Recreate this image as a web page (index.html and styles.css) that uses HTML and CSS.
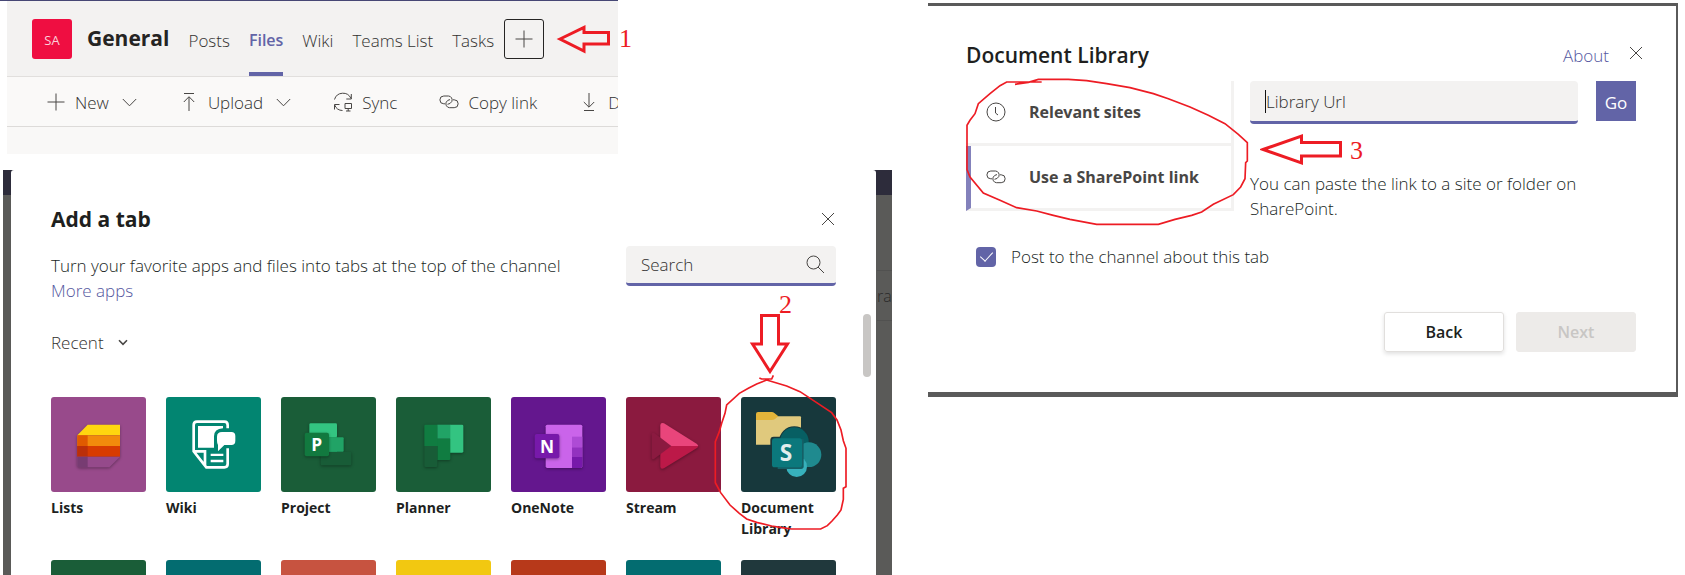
FILE: index.html
```
<!DOCTYPE html>
<html lang="en">
<head>
<meta charset="utf-8">
<title>Add a Document Library tab</title>
<link rel="stylesheet" href="styles.css">
</head>
<body>
<svg class="defs" aria-hidden="true">
  <symbol id="chevron" viewBox="0 0 15 9"><path d="M.8 1 7.5 7.8 14.2 1"/></symbol>
  <symbol id="close" viewBox="0 0 14 14"><path d="M1 1 13 13M13 1 1 13"/></symbol>
  <symbol id="plus" viewBox="0 0 20 20"><path d="M10 1.5v17M1.500 10h17"/></symbol>
  <symbol id="link" viewBox="0 0 20 14"><path d="M6 8.800H4.800A3.900 3.900 0 0 1 4.800 1H9.500A3.900 3.900 0 0 1 12.800 6.500Q11.500 9 8.500 9.300M14 4.800h1.200a3.900 3.900 0 0 1 0 7.900h-4.700A3.900 3.900 0 0 1 7.200 7.200Q8.500 4.800 11 4.600"/></symbol>
</svg>
<main class="page">
  <div class="column">
    <section class="channel">
      <header class="channel-head">
        <span class="avatar">SA</span>
        <h1 class="channel-name">General</h1>
        <nav class="tabs">
          <a class="tab" href="#posts">Posts</a>
          <a class="tab tab-active" href="#files">Files</a>
          <a class="tab" href="#wiki">Wiki</a>
          <a class="tab" href="#teams-list">Teams List</a>
          <a class="tab" href="#tasks">Tasks</a>
        </nav>
        <button class="add-tab" aria-label="Add a tab"><svg class="icon" width="20" height="20"><use href="#plus"/></svg></button>
      </header>
      <div class="toolbar">
        <button class="tool"><svg class="icon" width="20" height="20"><use href="#plus"/></svg>New<svg class="icon tool-chevron" width="15" height="9"><use href="#chevron"/></svg></button>
        <button class="tool"><svg class="icon" width="20" height="20" viewBox="0 0 20 20"><path d="M5 1.500h10M10 19V5M4.800 10 10 4.700 15.200 10"/></svg>Upload<svg class="icon tool-chevron" width="15" height="9"><use href="#chevron"/></svg></button>
        <button class="tool"><svg class="icon" width="20" height="20" viewBox="0 0 20 20"><path d="M1.500 7.500A8.800 8.800 0 0 1 18 6.500M18.300 2v5h-5M1.500 17.500v-5h5M1.700 13A8.500 8.500 0 0 0 9.500 18.500M12 11.500h6.500v5H12zM15.200 16.500V19M13 19h4.500"/></svg>Sync</button>
        <button class="tool"><svg class="icon" width="20" height="14"><use href="#link"/></svg>Copy link</button>
        <button class="tool"><svg class="icon" width="20" height="20" viewBox="0 0 20 20"><path d="M10 1v14M4.800 10 10 15.200 15.200 10M5 18.500h10"/></svg>D</button>
      </div>
      <div class="channel-body"></div>
      <svg class="mark mark-1" width="56" height="32" viewBox="556 23 56 32" aria-hidden="true"><path d="M560 39 584 27.500V32.500H608.500V44H584V51Z"/></svg>
      <span class="number number-1">1</span>
    </section>

    <section class="backdrop">
      <div class="backdrop-bar"></div>
      <span class="backdrop-text">ra</span>
      <div class="modal">
        <div class="modal-head">
          <h2 class="title">Add a tab</h2>
          <button class="close" aria-label="Close"><svg class="icon" width="14" height="14"><use href="#close"/></svg></button>
        </div>
        <div class="intro">
          <p class="intro-text">Turn your favorite apps and files into tabs at the top of the channel<br><a class="link" href="#more">More apps</a></p>
          <div class="search">
            <input class="search-input" type="text" placeholder="Search" aria-label="Search">
            <svg class="icon" width="19" height="19" viewBox="0 0 19 19"><circle cx="7.500" cy="7.500" r="6.500"/><path d="M12 12 18 18"/></svg>
          </div>
        </div>
        <button class="filter">Recent<svg class="icon filter-chevron" width="10" height="7" viewBox="0 0 10 7"><path d="M1 1.300 5 5.300 9 1.300"/></svg></button>
        <div class="apps">
          <a class="app" href="#lists">
            <svg class="tile lists" viewBox="0 0 285 285"><g class="raised"><path fill="#ffd60f" d="M110 83H207V115H79Z"/><path fill="#f28a0c" d="M79 115H207v32H79z"/><path fill="#e05a00" d="M79 115h31v32H79z"/><path fill="#d83b01" d="M79 147H207v32H79z"/><path fill="#bb2f09" d="M79 147h31v32H79z"/><path fill="#954a8b" d="M79 179H207L175 211H86q-7 0-7-7Z"/><path fill="#773c72" d="M79 179h31v32H86q-7 0-7-7Z"/></g></svg>
            <span>Lists</span></a>
          <a class="app" href="#wiki-app">
            <svg class="tile wiki" viewBox="0 0 285 285"><g fill="none" stroke="#fff" stroke-width="8"><path d="M185 94V84Q185 74 175 74H93Q83 74 83 84V163L121 211H175Q185 211 185 201V154M83 163H117V205"/></g><path fill="#fff" d="M96 87H171V94Q144 96 144 118V152H96ZM168 105H196Q208 105 208 117V131Q208 144 196 144H175L156 163V144Q153 140 153 131V119Q153 105 168 105ZM134 170h38v7h-38zM134 188h38v8h-38z"/></svg>
            <span>Wiki</span></a>
          <a class="app" href="#project">
            <svg class="tile project" viewBox="0 0 285 285"><g class="raised"><rect x="119" y="164" width="92" height="41" rx="4" fill="#185c37"/><rect x="137" y="121" width="51" height="43" rx="3" fill="#21a366"/><rect x="85" y="79" width="83" height="42" rx="4" fill="#33c481"/><path fill="#21a366" d="M142 121h26v43h-26z"/></g><g class="raised"><rect x="71" y="107" width="73" height="71" rx="6" fill="#12793f"/></g><text class="letter" x="107" y="162">P</text></svg>
            <span>Project</span></a>
          <a class="app" href="#planner">
            <svg class="tile planner" viewBox="0 0 285 285"><g class="raised"><path fill="#33c481" d="M162 83h36q4 0 4 4v76q0 4-4 4h-36z"/><path fill="#107c41" d="M124 125h39v60q0 4-4 4h-35zM89 83h35v64H85V87q0-4 4-4z"/><path fill="#21a366" d="M124 83h39v42h-39z"/><path fill="#185c37" d="M85 147h39v59q0 4-4 4H89q-4 0-4-4z"/></g></svg>
            <span>Planner</span></a>
          <a class="app" href="#onenote">
            <svg class="tile onenote" viewBox="0 0 285 285"><g class="raised"><rect x="104" y="83" width="110" height="130" rx="5" fill="#ca64ea"/><path fill="#ae4bd5" d="M183 119h31v32h-31z"/><path fill="#9332bf" d="M183 151h31v29h-31z"/><path fill="#7719aa" d="M183 180h31v28q0 5-5 5h-26z"/></g><g class="raised"><rect x="71" y="111" width="74" height="73" rx="6" fill="#7719aa"/></g><text class="letter" x="108" y="167">N</text></svg>
            <span>OneNote</span></a>
          <a class="app" href="#stream">
            <svg class="tile stream" viewBox="0 0 285 285"><g class="raised"><path fill="#bc1948" d="M103 147V209Q104 218 114 214L214 152 217 147Z"/><path fill="#e9457b" d="M103 147V84Q104 75 114 79L213 141 217 147Z"/><path fill="#8b1a40" d="M77 112Q78 105 86 109L136 147 84 186Q78 188 77 182Z"/></g></svg>
            <span>Stream</span></a>
          <a class="app" href="#document-library">
            <svg class="tile library" viewBox="0 0 285 285"><path fill="#e0c97d" d="M45 58H177q3 0 3 3V143H45Z"/><path fill="#e2b43a" d="M51 45H92Q97 45 100 48L112 58 102 66Q98 69 92 69H45V51Q45 45 51 45Z"/><circle cx="160" cy="134" r="46" fill="#17383c"/><rect x="88" y="119" width="98" height="96" rx="10" fill="#17383c"/><circle cx="160" cy="134" r="43" fill="#075f63"/><circle cx="204" cy="173" r="37" fill="#1f8a8f"/><circle cx="167" cy="209" r="31" fill="#37b1bc"/><path fill="#155f66" d="M110 126h78v82q0 8-8 8h-70z"/><rect x="93" y="124" width="90" height="87" rx="8" fill="#0b787c"/><text class="letter letter-s" x="135" y="191">S</text></svg>
            <span>Document Library</span>
            <svg class="mark mark-ring" width="150" height="170" viewBox="0 0 450 510" aria-hidden="true"><path d="M178 24 185 27H215L220 16M200 30 170 42 145 55 118 70 80 105 75 130 65 160 58 185 46 215V338L62 368 90 405 118 430 140 447 170 457 215 468 245 473 275 477H362L382 467 396 453 412 435 423 420 430 388V355L438 350V235L430 212 423 180 411 150 395 128 350 98 300 65 260 48 200 30"/></svg>
            <svg class="mark mark-2" width="42" height="64" viewBox="749 312 42 64" aria-hidden="true"><path d="M761.500 315.500V344H752.500L770 371.500 787.500 344H778.500V315.500Z"/></svg>
            <span class="number number-2">2</span></a>
          <span class="tile-peek peek-green"></span><span class="tile-peek peek-teal"></span><span class="tile-peek peek-coral"></span><span class="tile-peek peek-yellow"></span><span class="tile-peek peek-rust"></span><span class="tile-peek peek-teal"></span><span class="tile-peek peek-slate"></span>
        </div>
        <div class="scroll-thumb"></div>
      </div>
    </section>
  </div>

  <section class="dialog">
    <header class="dialog-head">
      <h2 class="title dialog-title">Document Library</h2>
      <a class="link" href="#about">About</a>
      <button class="close" aria-label="Close"><svg class="icon" width="14" height="14"><use href="#close"/></svg></button>
    </header>
    <div class="dialog-main">
      <div class="sources">
        <button class="source"><svg class="icon" width="20" height="20" viewBox="0 0 20 20"><circle cx="10" cy="10" r="9"/><path d="M9.500 5v6L12 13"/></svg>Relevant sites</button>
        <button class="source source-active"><svg class="icon" width="20" height="14"><use href="#link"/></svg>Use a SharePoint link</button>
        <svg class="mark mark-circle" width="290" height="150" viewBox="135 230 870 450" aria-hidden="true"><path d="M365 245H260L240 256 210 280 175 310 165 340 150 360 141 375V508L150 530 190 578 240 600 290 622 350 632 400 645 450 657 530 672H715L765 657 815 645 845 635 880 612 940 583 962 560 975 535 977 487 982 482V427L955 402 915 370 865 345 810 320 745 295 700 280 630 262 560 250 500 241 445 237H355L325 246 285 252"/></svg>
      </div>
      <form class="url-form">
        <div class="url-row">
          <div class="url-field">
            <input class="url-input" type="text" placeholder="Library Url" aria-label="Library Url">
            <span class="caret"></span>
          </div>
          <button class="go" type="button">Go</button>
        </div>
        <p class="hint">You can paste the link to a site or folder on SharePoint.</p>
        <svg class="mark mark-3" width="84" height="36" viewBox="1260 131 84 36" aria-hidden="true"><path d="M1263 149.500 1301.500 136V142.500H1340.500V156H1301.500V163Z"/></svg>
        <span class="number number-3">3</span>
      </form>
    </div>
    <label class="post"><input class="post-box" type="checkbox" checked>Post to the channel about this tab</label>
    <footer class="actions">
      <button class="action">Back</button>
      <button class="action action-off" disabled>Next</button>
    </footer>
  </section>
</main>
</body>
</html>
```
FILE: styles.css
```
* { box-sizing: border-box; }
body {
  margin: 0;
  background: #fff;
  color: #201f1e;
  font: 300 17px/25px "Open Sans", "Noto Sans", sans-serif;
}
h1, h2, p { margin: 0; }
a { color: inherit; text-decoration: none; }
button, input { font: inherit; color: inherit; border: 0; padding: 0; background: none; }
.defs { position: absolute; width: 0; height: 0; }
.icon { flex: none; fill: none; stroke: #484644; stroke-width: 1; }
.link { color: #5557a0; }
.title { font-size: 21px; line-height: 30px; font-weight: 700; }

.page {
  display: grid;
  grid-template-columns: minmax(0, 892fr) minmax(0, 750fr);
  gap: 36px;
  align-items: start;
  height: 100vh;
  padding-right: 7px;
  overflow: hidden;
}
.column { display: flex; flex-direction: column; gap: 16px; height: 100vh; }

/* Channel header */
.channel { position: relative; width: 69.3%; padding-left: 7px; border-top: 1px solid #464775; color: #323130; }
.channel-head {
  display: flex;
  align-items: center;
  height: 76px;
  padding-left: 25px;
  background: #f3f2f1;
  border-bottom: 1px solid #e1dfdd;
}
.avatar {
  width: 40px;
  height: 40px;
  margin-right: 15px;
  border-radius: 3px;
  background: #ef0e41;
  color: #fbd0da;
  font-size: 13px;
  font-weight: 400;
  line-height: 42px;
  text-align: center;
}
.channel-name { margin-right: 19px; color: #252423; font-size: 21px; line-height: 28px; padding-bottom: 2px; }
.tabs { display: flex; align-self: stretch; gap: 19px; margin-right: 10px; white-space: nowrap; }
.tab { padding-top: 27px; border-bottom: 4px solid transparent; }
.tab-active { border-color: #6264a7; color: #6264a7; font-size: 16px; font-weight: 600; }
.add-tab { display: grid; place-items: center; width: 40px; height: 40px; border: 1px solid #252423; border-radius: 3px; }
.toolbar {
  display: flex;
  align-items: center;
  gap: 42px;
  height: 50px;
  padding: 1px 0 0 39px;
  background: #faf9f8;
  border-bottom: 1px solid #dddbd9;
  overflow: hidden;
}
.tool { display: flex; flex: none; align-items: center; gap: 9px; }
.tool-chevron { margin-left: 4px; }
.channel-body { height: 27px; background: #f9f8f7; }

/* Add a tab */
.backdrop {
  position: relative;
  flex: 1;
  min-height: 0;
  margin-left: 3px;
  padding: 0 16px 0 8px;
  background: #5a5a58;
  overflow: hidden;
}
.backdrop-bar { position: absolute; inset: 0 0 auto; height: 25px; background: #2d2c3b; }
.backdrop-text {
  position: absolute;
  top: 100px;
  right: 0;
  width: 15px;
  height: 51px;
  border: solid #515150;
  border-width: 1px 0;
  color: #2a2a2a;
  font-size: 16px;
  line-height: 51px;
}
.modal { position: relative; height: 100%; padding: 34px 40px 0; background: #fff; border-radius: 3px 3px 0 0; }
.modal-head { display: flex; align-items: center; justify-content: space-between; }
.close { display: grid; place-items: center; width: 16px; height: 16px; }
.intro { display: flex; align-items: flex-start; justify-content: space-between; gap: 16px; margin-top: 12px; }
.intro-text { padding-top: 7px; }
.search {
  display: flex;
  align-items: center;
  width: 210px;
  height: 40px;
  padding: 0 11px 0 15px;
  border-bottom: 3px solid #6264a7;
  border-radius: 4px;
  background: #f3f2f1;
}
.search-input { flex: 1; min-width: 0; outline: 0; }
.search-input::placeholder, .url-input::placeholder { color: #323130; opacity: 1; }
.filter { display: flex; align-items: center; gap: 14px; margin-top: 27px; color: #323130; }
.filter-chevron { stroke-width: 1.6; }
.apps { display: grid; grid-template-columns: repeat(7, minmax(0, 1fr)); gap: 21px 20px; margin-top: 42px; }
.app { position: relative; font-size: 14px; line-height: 21px; font-weight: 700; }
.tile { display: block; width: 100%; margin-bottom: 5px; border-radius: 3px; }
.lists { background: #984a8b; }
.wiki { background: #028571; }
.project, .planner { background: #1a5d38; }
.onenote { background: #64178e; }
.stream { background: #8b1a3f; }
.library { background: #17383c; }
.raised { filter: drop-shadow(0 3px 5px rgba(0, 0, 0, .35)); }
.letter { fill: #fff; font-size: 52px; font-weight: 700; text-anchor: middle; }
.letter-s { fill: #e3eded; font-size: 68px; }
.tile-peek { height: 95px; border-radius: 3px; }
.peek-green { background: #1a5d38; }
.peek-teal { background: #036c70; }
.peek-coral { background: #c75340; }
.peek-yellow { background: #f2c811; }
.peek-rust { background: #b7391a; }
.peek-slate { background: #20383c; }
.scroll-thumb { position: absolute; top: 144px; right: 5px; width: 8px; height: 63px; border-radius: 4px; background: #c8c6c4; }

/* Document Library */
.dialog {
  margin-top: 3px;
  padding: 34px 40px 40px 38px;
  border: solid #5a5a5a;
  border-width: 3px 2px 5px 0;
}
.dialog-head { display: flex; align-items: center; gap: 19px; margin-right: -8px; }
.dialog-head .close { margin-bottom: 4px; }
.dialog-title { flex: 1; font-weight: 600; }
.dialog-main { display: grid; grid-template-columns: 268px minmax(0, 1fr); gap: 16px; margin-top: 11px; }
.sources { position: relative; align-self: start; border-right: 3px solid #f3f2f1; }
.source {
  display: flex;
  align-items: center;
  gap: 23px;
  width: 100%;
  height: 65px;
  padding-left: 20px;
  border-bottom: 3px solid #f3f2f1;
  color: #484644;
  font-size: 16px;
  font-weight: 700;
}
.source-active { padding-left: 15px; border-left: 5px solid #8381bb; }
.url-form { position: relative; }
.url-row { display: flex; align-items: flex-start; gap: 18px; }
.url-field { position: relative; flex: 1; }
.url-input {
  width: 100%;
  height: 43px;
  padding: 1px 0 0 16px;
  border-bottom: 3px solid #6264a7;
  border-radius: 4px;
  outline: 0;
  background: #f3f2f1;
}
.caret { position: absolute; top: 9px; left: 15px; width: 1px; height: 23px; background: #111; }
.go { width: 40px; height: 40px; padding-top: 2px; background: #6264a7; color: #fff; font-weight: 400; }
.hint { max-width: 350px; padding-top: 47px; }
.post { display: flex; align-items: center; gap: 15px; margin: 23px 0 0 10px; }
.post-box {
  appearance: none;
  width: 20px;
  height: 20px;
  margin: 0;
  border-radius: 4px;
  background: #6264a7;
  display: grid;
  place-items: center;
}
.post-box:checked::after {
  content: "";
  width: 6px;
  height: 11px;
  margin-bottom: 4px;
  border: solid #fff;
  border-width: 0 1px 1px 0;
  transform: rotate(42deg);
}
.actions { display: flex; justify-content: flex-end; gap: 12px; margin-top: 43px; }
.action {
  width: 120px;
  height: 40px;
  border: 1px solid #e1dfdd;
  border-radius: 3px;
  box-shadow: 0 2px 4px rgba(0, 0, 0, .12);
  font-size: 16px;
  font-weight: 600;
}
.action-off { border-color: #edebe9; background: #edebe9; box-shadow: none; color: #c8c6c4; }

/* Red pen marks */
.mark { position: absolute; fill: none; stroke: #ed1c24; stroke-width: 3; pointer-events: none; }
.mark-1 { top: 22px; left: 556px; }
.mark-3 { top: 50px; left: 10px; }
.mark-2 { top: -85px; left: 8px; }
.mark-ring, .mark-circle { stroke-width: 5; }
.mark-ring { top: -27px; left: -41px; }
.mark-circle { top: -4px; left: -1px; }
.number { position: absolute; color: #ed1c24; font: 26px/26px "Liberation Serif", serif; }
.number-1 { top: 25px; left: 619px; }
.number-2 { top: -105px; left: 38px; }
.number-3 { top: 57px; left: 100px; }
```
